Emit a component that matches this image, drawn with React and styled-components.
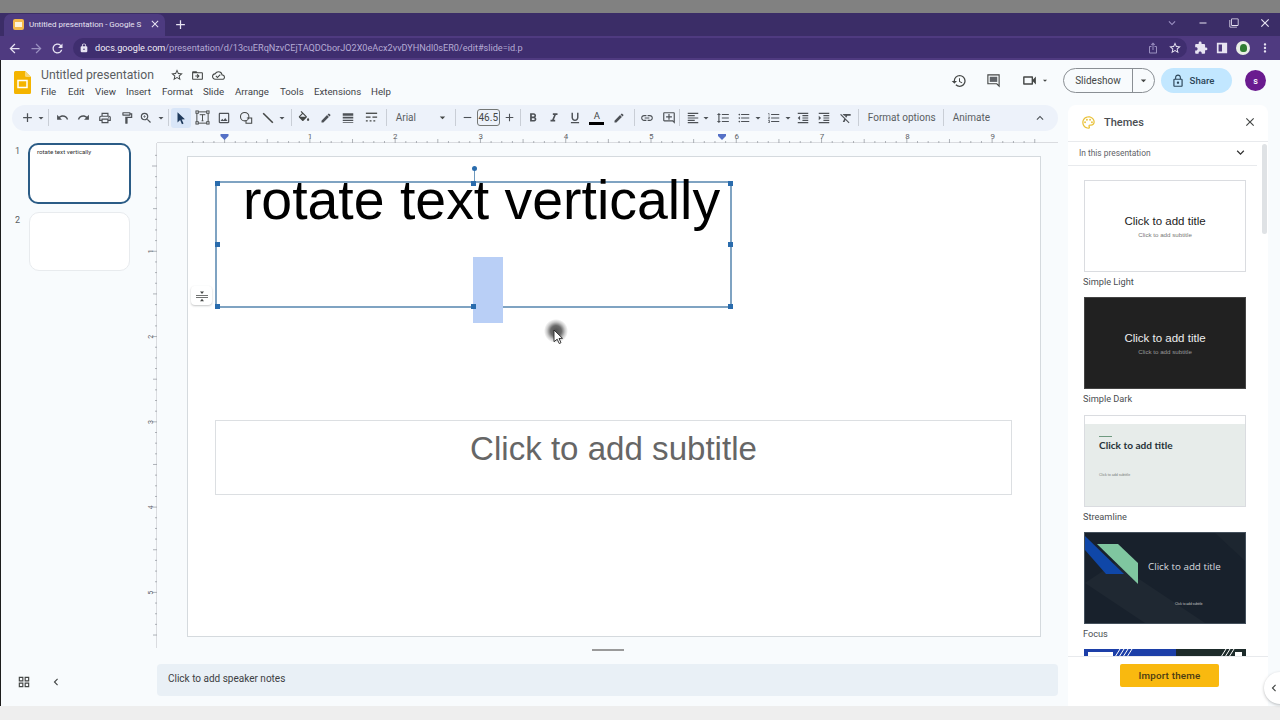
import styled, { createGlobalStyle } from 'styled-components';
import {
  MdAdd, MdArrowDropDown, MdUndo, MdRedo, MdOutlinePrint, MdOutlineFormatPaint, MdOutlineZoomIn,
  MdOutlineImage, MdEdit, MdLineWeight, MdRemove, MdFormatBold, MdFormatItalic,
  MdFormatUnderlined, MdLink, MdOutlineAddComment, MdFormatAlignLeft, MdFormatLineSpacing,
  MdFormatListBulleted, MdFormatListNumbered, MdFormatIndentDecrease, MdFormatIndentIncrease, MdFormatClear,
  MdExpandLess, MdExpandMore, MdHistory, MdOutlineVideocam, MdLockOutline, MdOutlinePalette, MdClose,
  MdOutlineGridView, MdChevronLeft, MdArrowBack, MdArrowForward, MdRefresh, MdLock, MdStarBorder,
  MdExtension, MdMoreVert, MdKeyboardArrowDown, MdFilterNone, MdDriveFileMoveOutline, MdOutlineCloudDone,
  MdOutlineIosShare,
} from 'react-icons/md';

const GlobalStyle = createGlobalStyle`
html, body {
  margin: 0;
  width: 1280px;
  height: 720px;
  overflow: hidden;
  background: #f8fbfd;
  font-family: Roboto, "Liberation Sans", sans-serif;
}
* { box-sizing: border-box; }
`;

const Page = styled.div`
  width: 1280px;
  height: 720px;
  display: flex;
  flex-direction: column;
  position: relative;
  overflow: hidden;
`;

const TopStrip = styled.div`
  height: 13px;
  flex: none;
  background: #818181;
`;

const TabStrip = styled.div`
  height: 23px;
  flex: none;
  background: #3b2d67;
  display: flex;
  align-items: flex-end;
  color: #e8e4f2;
  padding-left: 4px;
`;

const Tab = styled.div`
  width: 161px;
  height: 22px;
  background: #4d3b80;
  border-radius: 7px 7px 0 0;
  display: flex;
  align-items: center;
  padding: 0 0 2px 9px;
  font-size: 8px;
  white-space: nowrap;
`;

const Favicon = styled.div`
  width: 11px;
  height: 11px;
  border-radius: 2px;
  background: #f3b94a;
  margin-right: 5px;
  display: flex;
  align-items: center;
  justify-content: center;
  &::after {
    content: '';
    width: 7px;
    height: 5px;
    background: #fdf3da;
  }
`;

const TabTitle = styled.span`
  width: 114px;
`;

const ChromeSlot = styled.div`
  width: ${p => p.$w || 22}px;
  margin-left: ${p => p.$ml || 0}px;
  margin-bottom: ${p => p.$mb || 0}px;
  height: ${p => p.$h ? `${p.$h}px` : 'auto'};
  flex: none;
  display: flex;
  align-items: center;
  justify-content: center;
  color: ${p => p.$dim ? '#9a8fc0' : '#e8e4f2'};
  font-size: ${p => p.$size || 14}px;
`;

const WindowControls = styled.div`
  margin-left: auto;
  margin-bottom: 2px;
  height: 22px;
  display: flex;
  align-items: center;
`;

const AddressBar = styled.div`
  height: 24px;
  flex: none;
  background: #4f3a80;
  display: flex;
  align-items: center;
  padding-left: 3px;
`;

const Omnibox = styled.div`
  width: 1114px;
  height: 20px;
  margin-left: 5px;
  background: #3f2e6f;
  border-radius: 10px;
  display: flex;
  align-items: center;
  padding-left: 6px;
  font-size: 9.15px;
  color: #b5abd4;
  white-space: nowrap;
`;

const Host = styled.span`
  color: #f0edf7;
`;

const OmniEnd = styled.div`
  margin-left: auto;
  display: flex;
  align-items: center;
  padding-right: 1px;
`;

const ChromeAvatar = styled.div`
  width: 14px;
  height: 14px;
  border-radius: 50%;
  background: #e9efe6;
  display: flex;
  align-items: center;
  justify-content: center;
  &::after {
    content: '';
    width: 7px;
    height: 8px;
    border-radius: 50% 50% 40% 40%;
    background: #2f7d32;
  }
`;

const Docs = styled.div`
  flex: 1;
  min-height: 0;
  display: flex;
  flex-direction: column;
  background: #f8fbfd;
  box-shadow: inset 1px 0 0 #1d1d1d;
`;

const Header = styled.header`
  height: 45px;
  flex: none;
  display: flex;
  align-items: flex-start;
  padding: 0 14px;
`;

const LogoWrap = styled.div`
  margin-top: 11px;
  width: 17px;
  height: 23px;
  flex: none;
`;

const TitleBlock = styled.div`
  margin-left: 10px;
  padding-top: 7px;
`;

const TitleRow = styled.div`
  display: flex;
  align-items: center;
  height: 16px;
`;

const DocTitle = styled.div`
  font-size: 12.2px;
  color: #5a5e62;
  width: 125px;
  white-space: nowrap;
`;

const HeadIcon = styled.div`
  width: ${p => p.$w || 21}px;
  margin-left: ${p => p.$ml || 0}px;
  flex: none;
  display: flex;
  align-items: center;
  justify-content: center;
  color: #444746;
  font-size: ${p => p.$size || 13}px;
`;

const MenuRow = styled.nav`
  display: flex;
  height: 14px;
  margin-top: 1px;
  align-items: center;
`;

const MenuItem = styled.div`
  width: ${p => p.$w}px;
  font-size: 9.7px;
  color: #3f4347;
  white-space: nowrap;
`;

const HeaderRight = styled.div`
  margin-left: auto;
  margin-top: 8px;
  height: 25px;
  display: flex;
  align-items: center;
`;

const SlideshowButton = styled.div`
  width: 92px;
  height: 25px;
  margin-left: 13px;
  border: 1px solid #8a8f94;
  border-radius: 13px;
  display: flex;
  align-items: center;
  font-size: 10px;
  color: #444746;
`;

const SlideshowLabel = styled.div`
  width: 69px;
  height: 100%;
  display: flex;
  align-items: center;
  justify-content: center;
  border-right: 1px solid #8a8f94;
`;

const SlideshowCaret = styled.div`
  flex: 1;
  display: flex;
  justify-content: center;
  font-size: 13px;
`;

const ShareButton = styled.div`
  width: 71px;
  height: 25px;
  margin-left: 6px;
  padding-right: 8px;
  border-radius: 13px;
  background: #c2e7ff;
  color: #2c4558;
  display: flex;
  align-items: center;
  justify-content: center;
  gap: 5px;
  font-size: 9.6px;
  font-weight: 500;
  svg { font-size: 14px; }
`;

const Avatar = styled.div`
  width: 21px;
  height: 21px;
  margin-left: 13px;
  border-radius: 50%;
  background: #6a1b8f;
  color: #fff;
  font-size: 9px;
  font-weight: 500;
  display: flex;
  align-items: center;
  justify-content: center;
`;

const Body = styled.div`
  flex: 1;
  display: flex;
  min-height: 0;
`;

const LeftArea = styled.div`
  width: 1068px;
  display: flex;
  flex-direction: column;
`;

const Toolbar = styled.div`
  height: 26px;
  width: 1046px;
  margin-left: 12px;
  padding: 0 7px 1px 8px;
  flex: none;
  background: #edf2fa;
  border-radius: 13px;
  display: flex;
  align-items: center;
  font-size: 14px;
  color: #4d5156;
`;

const Tool = styled.div`
  width: ${p => p.$w}px;
  height: ${p => p.$active ? 20 : 22}px;
  flex: none;
  margin-left: ${p => p.$ml || 0}px;
  display: flex;
  align-items: center;
  justify-content: center;
  font-size: ${p => p.$size || 14}px;
  background: ${p => p.$active ? '#d9e6f8' : 'transparent'};
  border-radius: 3px;
  svg { flex: none; }
`;

const Caret = ({ w, ml }) => (
  <Tool $w={w} $ml={ml} $size={12}><MdArrowDropDown /></Tool>
);

const Sep = styled.div`
  width: 1px;
  height: 17px;
  flex: none;
  background: #c9ced6;
  margin-left: ${p => p.$ml || 0}px;
`;

const FontPicker = styled.div`
  width: 63px;
  flex: none;
  padding: 0 1px 0 9px;
  display: flex;
  align-items: center;
  justify-content: space-between;
  font-size: 10px;
  color: #5a5e62;
  svg { font-size: 13px; color: #444746; }
`;

const SizeInput = styled.div`
  width: 23px;
  height: 17px;
  margin-left: -1px;
  flex: none;
  border: 1px solid #747775;
  border-radius: 3px;
  font-size: 10px;
  display: flex;
  align-items: center;
  justify-content: center;
  color: #444746;
`;

const ColorA = styled.div`
  width: 15px;
  display: flex;
  flex-direction: column;
  align-items: center;
  font-size: 9.5px;
  line-height: 11px;
  color: #444746;
  &::after {
    content: '';
    width: 15px;
    height: 3px;
    margin-top: 1px;
    background: #000;
  }
`;

const ToolText = styled.div`
  margin-left: ${p => p.$ml}px;
  font-size: 10px;
  color: #5a5e62;
  white-space: nowrap;
  flex: none;
  width: ${p => p.$w}px;
`;

const Workspace = styled.div`
  height: 533px;
  display: flex;
  flex: none;
`;

const Filmstrip = styled.aside`
  width: 145px;
  flex: none;
  padding-top: 12px;
`;

const FilmRow = styled.div`
  display: flex;
  height: 69px;
`;

const FilmNumber = styled.div`
  width: 28px;
  padding-left: 15px;
  padding-top: 3px;
  font-size: 9px;
  color: #5a5e62;
`;

const FilmThumb = styled.div`
  background: #fff;
  border-radius: 10px;
  border: ${p => p.$active ? '2px solid #2b5c86' : '1px solid #e8ebee'};
  width: ${p => p.$active ? 103 : 101}px;
  height: ${p => p.$active ? 61 : 59}px;
  margin-left: ${p => p.$active ? 0 : 1}px;
  padding: 3px 0 0 7px;
  font-size: 6.2px;
  color: #333;
  white-space: nowrap;
`;

const EditorColumn = styled.div`
  flex: 1;
  display: flex;
  flex-direction: column;
`;

const RulerRow = styled.div`
  display: flex;
  flex: none;
  height: ${p => p.$h || 12}px;
`;

const Canvas = styled.div`
  flex: 1;
  padding: 13px 0 0 30px;
`;

const Slide = styled.section`
  width: 854px;
  height: 481px;
  background: #fff;
  border: 1px solid #d5dade;
  position: relative;
`;

const TitleBox = styled.div`
  position: absolute;
  left: 27px;
  top: 24px;
  width: 517px;
  height: 127px;
  border: 2px solid #7fa3c2;
`;

const TitleText = styled.div`
  position: absolute;
  left: 16px;
  right: 0;
  top: -15px;
  text-align: center;
  font-family: "Liberation Sans", Arial, sans-serif;
  font-size: 55.4px;
  line-height: 64px;
  color: #000;
  white-space: nowrap;
`;

const TextSelection = styled.div`
  position: absolute;
  left: 256px;
  top: 74px;
  width: 30px;
  height: 66px;
  background: #b9cff6;
`;

const Handle = styled.div`
  position: absolute;
  left: ${p => p.$x}%;
  top: ${p => p.$y}%;
  width: 5px;
  height: 5px;
  margin: -2.5px 0 0 -2.5px;
  background: #2a6cad;
`;

const RotateStem = styled.div`
  position: absolute;
  left: 50%;
  top: -15px;
  height: 15px;
  width: 1px;
  background: #6f99bd;
  &::before {
    content: '';
    position: absolute;
    left: -2px;
    top: -2px;
    width: 5px;
    height: 5px;
    border-radius: 50%;
    background: #2a6cad;
  }
`;

const AlignButton = styled.div`
  position: absolute;
  left: 3px;
  top: 129px;
  width: 21px;
  height: 19px;
  background: #fff;
  border-radius: 4px;
  box-shadow: 0 1px 2px rgba(60, 64, 67, .3);
  display: flex;
  align-items: center;
  justify-content: center;
`;

const SubtitleBox = styled.div`
  position: absolute;
  left: 27px;
  top: 263px;
  width: 797px;
  height: 75px;
  border: 1px solid #dcdfe2;
  text-align: center;
  padding-top: 9px;
  font-family: "Liberation Sans", Arial, sans-serif;
  font-size: 33.1px;
  line-height: 38px;
  color: #666;
`;

const CursorHalo = styled.div`
  position: absolute;
  left: 356px;
  top: 162px;
  width: 24px;
  height: 24px;
  border-radius: 50%;
  background: radial-gradient(closest-side, #4f4f4f 0%, #6a6a6a 45%, rgba(150, 150, 150, .5) 75%, rgba(200, 200, 200, 0) 100%);
`;

const CursorArrow = styled.svg`
  position: absolute;
  left: 365px;
  top: 172px;
  width: 11px;
  height: 15px;
`;

const SplitGrip = styled.div`
  width: 32px;
  height: 2px;
  margin: 12px 0 0 405px;
  background: #9a9a9a;
`;

const NotesRow = styled.div`
  height: 32px;
  flex: none;
  display: flex;
  width: 1058px;
`;

const FilmTools = styled.div`
  width: 157px;
  flex: none;
  display: flex;
  align-items: center;
  padding: 4px 0 0 17px;
  color: #444746;
  font-size: 14px;
  gap: 18px;
  svg { flex: none; }
`;

const Notes = styled.div`
  flex: 1;
  background: #e9f0f6;
  border-radius: 4px;
  display: flex;
  align-items: center;
  padding: 0 0 4px 11px;
  font-size: 10px;
  color: #3c4043;
`;

const Panel = styled.aside`
  width: 200px;
  background: #fff;
  border-radius: 8px 8px 0 0;
  display: flex;
  flex-direction: column;
  position: relative;
`;

const PanelHeader = styled.div`
  height: 37px;
  flex: none;
  border-bottom: 1px solid #e8eaed;
  display: flex;
  align-items: center;
  padding: 0 11px 2px 13px;
  font-size: 11px;
  font-weight: 500;
  color: #4a4e52;
`;

const PanelTitle = styled.div`
  margin-left: 8px;
  flex: 1;
`;

const PanelScroll = styled.div`
  flex: 1;
  min-height: 0;
  position: relative;
  overflow: hidden;
`;

const Scrollbar = styled.div`
  position: absolute;
  right: 1px;
  top: 2px;
  width: 5px;
  height: 90px;
  background: #dfe2e5;
  border-radius: 3px;
`;

const SectionHead = styled.div`
  width: 189px;
  height: 24px;
  border-bottom: 1px solid #e8eaed;
  display: flex;
  align-items: center;
  justify-content: space-between;
  padding: 0 9px 2px 11px;
  font-size: 8.4px;
  color: #5f6368;
  svg { font-size: 15px; color: #333; }
`;

const ThemeList = styled.div`
  padding: 14px 0 0 16px;
`;

const ThemeCard = styled.div`
  height: 117.3px;
  font-size: 9.2px;
  color: #4a4e52;
`;

const ThemeThumb = styled.div`
  width: 162px;
  height: 92px;
  border: 1px solid ${p => p.$border || '#dadce0'};
  background: ${p => p.$bg};
  color: ${p => p.$fg};
  position: relative;
  overflow: hidden;
  display: flex;
  flex-direction: column;
  align-items: center;
  justify-content: center;
  font-family: "Liberation Sans", Arial, sans-serif;
`;

const ThumbTitle = styled.div`
  font-size: 11.5px;
  margin-top: 1px;
`;

const ThumbSub = styled.div`
  font-size: 6.2px;
  margin-top: 4px;
  color: ${p => p.$c};
`;

const ThemeName = styled.div`
  margin: 4px 0 0 -1px;
  line-height: 12px;
`;

const StreamBand = styled.div`
  position: absolute;
  left: 0;
  right: 0;
  top: 0;
  height: 8px;
  background: #fff;
`;

const StreamRule = styled.div`
  position: absolute;
  left: 14px;
  top: 20px;
  width: 13px;
  height: 1px;
  background: #6f9a80;
`;

const StreamTitle = styled.div`
  position: absolute;
  left: 14px;
  top: 23px;
  font-family: Lato, sans-serif;
  font-weight: 700;
  font-size: 10.1px;
  color: #263238;
  white-space: nowrap;
`;

const StreamSub = styled.div`
  position: absolute;
  left: 14px;
  top: 57px;
  font-size: 3.6px;
  color: #777;
  white-space: nowrap;
`;

const FocusArt = styled.svg`
  position: absolute;
  left: 0;
  top: 0;
  width: 160px;
  height: 90px;
`;

const FocusTitle = styled.div`
  position: absolute;
  left: 63px;
  top: 27px;
  font-family: "Open Sans", sans-serif;
  font-size: 9.8px;
  color: #d6dadf;
  white-space: nowrap;
`;

const FocusSub = styled.div`
  position: absolute;
  left: 90px;
  top: 69px;
  font-size: 3.2px;
  color: #ccc;
  white-space: nowrap;
`;

const PanelFooter = styled.div`
  height: 50px;
  flex: none;
  background: #fff;
  border-top: 1px solid #e8eaed;
  display: flex;
  justify-content: center;
  padding: 7px 0 0 3px;
`;

const ImportButton = styled.div`
  width: 99px;
  height: 23px;
  border-radius: 2px;
  background: #f9b90f;
  color: #4a3c14;
  font-size: 9.8px;
  font-weight: 500;
  letter-spacing: .2px;
  display: flex;
  align-items: center;
  justify-content: center;
`;

const CollapseButton = styled.div`
  position: absolute;
  left: 1264px;
  top: 672px;
  width: 32px;
  height: 32px;
  border-radius: 50%;
  background: #fff;
  box-shadow: 0 1px 3px rgba(60, 64, 67, .35);
  display: flex;
  align-items: center;
  padding-left: 3px;
  font-size: 14px;
  color: #444746;
`;

const BottomStrip = styled.div`
  height: 14px;
  flex: none;
  background: #eeeeee;
`;

const hTicks = [];
for (let k = -3; k <= 76; k++) {
  const x = 224.6 + k * 10.66 - 157;
  const h = k % 8 === 0 ? 5 : k % 4 === 0 ? 4 : 2;
  hTicks.push(<line key={k} x1={x} x2={x} y1={12 - h} y2={12} stroke="#9aa0a6" strokeWidth=".8" />);
}
const vTicks = [];
for (let k = -1; k <= 44; k++) {
  const y = 166 + k * 10.66 - 143;
  const w = k % 8 === 0 ? 5 : k % 4 === 0 ? 4 : 2;
  vTicks.push(<line key={k} x1={12 - w} x2={12} y1={y} y2={y} stroke="#9aa0a6" strokeWidth=".8" />);
}

const HRuler = () => (
  <svg width="901" height="12" style={{ marginLeft: 12 }}>
    <line x1="0" x2="901" y1="11.5" y2="11.5" stroke="#dadce0" />
    {hTicks}
    {[1, 2, 3, 4, 5, 6, 7, 8, 9].map(n => (
      <text key={n} x={67.6 + n * 85.35} y="8" fontSize="8" fill="#5f6368" textAnchor="middle" fontFamily="Roboto">{n}</text>
    ))}
    <path d="M63.5 3h8v2l-4 4-4-4z" fill="#5470c6" />
    <path d="M561 3h8v2l-4 4-4-4z" fill="#5470c6" />
  </svg>
);

const VRuler = () => (
  <svg width="12" height="505" style={{ flex: 'none' }}>
    <line x1="11.5" x2="11.5" y1="0" y2="505" stroke="#dadce0" />
    {vTicks}
    {[1, 2, 3, 4, 5].map(n => {
      const y = 23 + n * 85.35;
      return <text key={n} x="6" y={y} fontSize="7" fill="#5f6368" textAnchor="middle" transform={`rotate(-90 6 ${y})`} dominantBaseline="middle" fontFamily="Roboto">{n}</text>;
    })}
  </svg>
);

const DocsLogo = () => (
  <svg viewBox="0 0 17 23" width="17" height="23">
    <path d="M1.5 0H11l6 6v15.5a1.5 1.5 0 0 1-1.5 1.5h-14A1.5 1.5 0 0 1 0 21.500V1.500A1.500 1.500 0 0 1 1.500 0z" fill="#f4b400" />
    <path d="M11 0l6 6h-4.500A1.500 1.500 0 0 1 11 4.500z" fill="#f8d777" />
    <path d="M4 9.500h9v7H4z" fill="none" stroke="#fff" strokeWidth="1.500" />
  </svg>
);

const TextBoxIcon = () => (
  <svg viewBox="0 0 16 16" width="15" height="15" fill="none" stroke="#444746" strokeWidth="1">
    <rect x="2" y="2" width="12" height="12" />
    <rect x="1" y="1" width="2.500" height="2.500" fill="#edf2fa" />
    <rect x="12.500" y="1" width="2.500" height="2.500" fill="#edf2fa" />
    <rect x="1" y="12.500" width="2.500" height="2.500" fill="#edf2fa" />
    <rect x="12.500" y="12.500" width="2.500" height="2.500" fill="#edf2fa" />
    <path d="M5 5h6M8 5v6.500M7 11.500h2" />
  </svg>
);

const ShapeIcon = () => (
  <svg viewBox="0 0 16 16" width="14" height="14" fill="none" stroke="#444746" strokeWidth="1.200">
    <circle cx="6.500" cy="6.500" r="4.800" />
    <path d="M9 8h5.500v6H8v-3.500" />
  </svg>
);

const LineIcon = () => (
  <svg viewBox="0 0 16 16" width="14" height="14">
    <path d="M2.500 2.500l11 11" stroke="#444746" strokeWidth="1.800" />
  </svg>
);

const CursorIcon = () => (
  <svg viewBox="0 0 16 16" width="14" height="14">
    <path d="M4 1.500l8.500 7.800-3.700.4 2.100 4.500-1.800.8-2.100-4.600L4 13z" fill="#1f3a5c" />
  </svg>
);

const FillIcon = () => (
  <svg viewBox="0 0 24 24" width="14" height="14" fill="#444746">
    <path d="M16.560 8.940L7.620 0 6.210 1.410l2.380 2.380-5.150 5.150c-.59.59-.59 1.540 0 2.120l5.500 5.500c.29.29.68.44 1.060.44s.77-.15 1.060-.44l5.500-5.500c.59-.58.59-1.530 0-2.120zM5.210 10L10 5.210 14.790 10H5.210zM19 11.500s-2 2.170-2 3.500c0 1.100.9 2 2 2s2-.9 2-2c0-1.330-2-3.500-2-3.500z" />
  </svg>
);

const DashIcon = () => (
  <svg viewBox="0 0 16 16" width="15" height="15" stroke="#444746">
    <path d="M2 3.500h12" strokeWidth="1.400" />
    <path d="M2 7.500h5M9 7.500h5" strokeWidth="1.400" />
    <path d="M2 11.500h2M6 11.500h2M10 11.500h2" strokeWidth="1.400" />
  </svg>
);

const CommentIcon = () => (
  <svg viewBox="0 0 16 16" width="15" height="15">
    <path d="M2 2h12v12l-2.500-2.500H2z" fill="none" stroke="#444746" strokeWidth="1.200" />
    <rect x="4" y="4" width="8" height="5.500" fill="#5f6368" />
  </svg>
);

const VerticalAlignIcon = () => (
  <svg viewBox="0 0 14 14" width="14" height="14" fill="#444746">
    <path d="M1 6h12v.8H1zM1 8h12v.8H1zM7 5L5 2.500h4zM7 9.800l2 2.500H5z" />
  </svg>
);

const SidePanelIcon = () => (
  <svg viewBox="0 0 14 14" width="12" height="12">
    <path d="M2 2h10v10H2z" fill="none" stroke="#e8e4f2" strokeWidth="2" />
    <rect x="7" y="2" width="5" height="10" fill="#e8e4f2" />
  </svg>
);

const ThemeFocusShapes = () => (
  <FocusArt viewBox="0 0 160 90">
    <path d="M0 50L60 90H120L30 30z" fill="#1f2832" />
    <path d="M130 0L160 28V0z" fill="#1d2630" />
    <path d="M0 3L39 41H21L0 17z" fill="#0f47a8" />
    <path d="M12 11H33L53 30V51z" fill="#7fc6a0" />
  </FocusArt>
);

const ThemeFifthArt = () => (
  <svg viewBox="0 0 162 8" width="162" height="8" style={{ display: 'block' }}>
    <rect width="92" height="8" fill="#1c3fa8" />
    <rect x="92" width="70" height="8" fill="#1d2b2a" />
    <rect x="4" y="3" width="25" height="5" fill="#fff" />
    <rect x="151" y="3" width="7" height="5" fill="#fff" />
    <path d="M31 8l5-8M35 8l5-8M39 8l5-8M43 8l5-8M137 8l5-8M141 8l5-8M145 8l5-8" stroke="#fff" strokeWidth="1" />
  </svg>
);

const handles = [[0, 0], [50, 0], [100, 0], [0, 50], [100, 50], [0, 100], [50, 100], [100, 100]];

export default function App() {
  return (
    <Page>
      <GlobalStyle />
      <TopStrip />
      <TabStrip>
        <Tab>
          <Favicon />
          <TabTitle>Untitled presentation - Google S</TabTitle>
          <ChromeSlot $w={14} $ml={5} $size={12}><MdClose /></ChromeSlot>
        </Tab>
        <ChromeSlot $w={18} $ml={6} $h={22} $mb={1} $size={15}><MdAdd /></ChromeSlot>
        <WindowControls>
          <ChromeSlot $w={30} $dim $size={14}><MdKeyboardArrowDown /></ChromeSlot>
          <ChromeSlot $w={31} $size={12}><MdRemove /></ChromeSlot>
          <ChromeSlot $w={31} $size={10}><MdFilterNone /></ChromeSlot>
          <ChromeSlot $w={31} $size={14}><MdClose /></ChromeSlot>
        </WindowControls>
      </TabStrip>
      <AddressBar>
        <ChromeSlot $size={15}><MdArrowBack /></ChromeSlot>
        <ChromeSlot $dim $size={15}><MdArrowForward /></ChromeSlot>
        <ChromeSlot $ml={-1} $size={15}><MdRefresh /></ChromeSlot>
        <Omnibox>
          <MdLock size={10} color="#e8e4f2" style={{ flex: 'none', marginRight: 6 }} />
          <span><Host>docs.google.com</Host>/presentation/d/13cuERqNzvCEjTAQDCborJO2X0eAcx2vvDYHNdl0sER0/edit#slide=id.p</span>
          <OmniEnd>
            <ChromeSlot $dim $size={12}><MdOutlineIosShare /></ChromeSlot>
            <ChromeSlot $size={14}><MdStarBorder /></ChromeSlot>
          </OmniEnd>
        </Omnibox>
        <ChromeSlot $ml={3} $size={14}><MdExtension /></ChromeSlot>
        <ChromeSlot $w={20}><SidePanelIcon /></ChromeSlot>
        <ChromeSlot $w={22}><ChromeAvatar /></ChromeSlot>
        <ChromeSlot $w={22} $size={14}><MdMoreVert /></ChromeSlot>
      </AddressBar>
      <Docs>
        <Header>
          <LogoWrap><DocsLogo /></LogoWrap>
          <TitleBlock>
            <TitleRow>
              <DocTitle>Untitled presentation</DocTitle>
              <HeadIcon $size={14}><MdStarBorder /></HeadIcon>
              <HeadIcon><MdDriveFileMoveOutline /></HeadIcon>
              <HeadIcon><MdOutlineCloudDone /></HeadIcon>
            </TitleRow>
            <MenuRow>
              <MenuItem $w={27}>File</MenuItem>
              <MenuItem $w={27}>Edit</MenuItem>
              <MenuItem $w={31}>View</MenuItem>
              <MenuItem $w={36}>Insert</MenuItem>
              <MenuItem $w={41}>Format</MenuItem>
              <MenuItem $w={32}>Slide</MenuItem>
              <MenuItem $w={45}>Arrange</MenuItem>
              <MenuItem $w={34}>Tools</MenuItem>
              <MenuItem $w={57}>Extensions</MenuItem>
              <MenuItem $w={24}>Help</MenuItem>
            </MenuRow>
          </TitleBlock>
          <HeaderRight>
            <HeadIcon $w={22} $size={16}><MdHistory /></HeadIcon>
            <HeadIcon $w={22} $ml={12} $size={16}><CommentIcon /></HeadIcon>
            <HeadIcon $w={22} $ml={14} $size={17}><MdOutlineVideocam /></HeadIcon>
            <HeadIcon $w={10} $size={13}><MdArrowDropDown /></HeadIcon>
            <SlideshowButton>
              <SlideshowLabel>Slideshow</SlideshowLabel>
              <SlideshowCaret><MdArrowDropDown /></SlideshowCaret>
            </SlideshowButton>
            <ShareButton><MdLockOutline />Share</ShareButton>
            <Avatar>s</Avatar>
          </HeaderRight>
        </Header>
        <Body>
          <LeftArea>
            <Toolbar>
              <Tool $w={14} $size={15}><MdAdd /></Tool>
              <Caret w={14} />
              <Sep />
              <Tool $w={21.5} $ml={2.25} $size={13}><MdUndo /></Tool>
              <Tool $w={21.5} $size={13}><MdRedo /></Tool>
              <Tool $w={21.5}><MdOutlinePrint /></Tool>
              <Tool $w={21.5}><MdOutlineFormatPaint /></Tool>
              <Tool $w={18}><MdOutlineZoomIn /></Tool>
              <Caret w={11} />
              <Sep $ml={2} />
              <Tool $w={20} $ml={2} $active><CursorIcon /></Tool>
              <Tool $w={22}><TextBoxIcon /></Tool>
              <Tool $w={21.5}><MdOutlineImage /></Tool>
              <Tool $w={23}><ShapeIcon /></Tool>
              <Tool $w={21}><LineIcon /></Tool>
              <Caret w={7} />
              <Sep $ml={5} />
              <Tool $w={22} $ml={1}><FillIcon /></Tool>
              <Tool $w={22} $size={12}><MdEdit /></Tool>
              <Tool $w={23}><MdLineWeight /></Tool>
              <Tool $w={23}><DashIcon /></Tool>
              <Sep $ml={3} />
              <FontPicker>Arial<MdArrowDropDown /></FontPicker>
              <Sep $ml={5} />
              <Tool $w={20} $ml={2} $size={13}><MdRemove /></Tool>
              <SizeInput>46.5</SizeInput>
              <Tool $w={20} $size={13}><MdAdd /></Tool>
              <Sep />
              <Tool $w={22} $ml={1}><MdFormatBold /></Tool>
              <Tool $w={21}><MdFormatItalic /></Tool>
              <Tool $w={21}><MdFormatUnderlined /></Tool>
              <Tool $w={22}><ColorA>A</ColorA></Tool>
              <Tool $w={23} $size={12}><MdEdit /></Tool>
              <Sep $ml={3.5} />
              <Tool $w={22} $ml={1}><MdLink /></Tool>
              <Tool $w={21}><MdOutlineAddComment /></Tool>
              <Sep />
              <Tool $w={21} $ml={2}><MdFormatAlignLeft /></Tool>
              <Caret w={5} />
              <Tool $w={29}><MdFormatLineSpacing /></Tool>
              <Tool $w={14}><MdFormatListBulleted /></Tool>
              <Caret w={14} />
              <Tool $w={17}><MdFormatListNumbered /></Tool>
              <Caret w={11} />
              <Tool $w={20}><MdFormatIndentDecrease /></Tool>
              <Tool $w={22}><MdFormatIndentIncrease /></Tool>
              <Tool $w={22}><MdFormatClear /></Tool>
              <Sep $ml={1} />
              <ToolText $ml={8.5} $w={66}>Format options</ToolText>
              <Sep $ml={9} />
              <ToolText $ml={9} $w={36}>Animate</ToolText>
              <Tool $w={22} $ml={40}><MdExpandLess /></Tool>
            </Toolbar>
            <Workspace>
              <Filmstrip>
                <FilmRow>
                  <FilmNumber>1</FilmNumber>
                  <FilmThumb $active>rotate text vertically</FilmThumb>
                </FilmRow>
                <FilmRow>
                  <FilmNumber>2</FilmNumber>
                  <FilmThumb />
                </FilmRow>
              </Filmstrip>
              <EditorColumn>
                <RulerRow><HRuler /></RulerRow>
                <RulerRow $h={521}>
                  <VRuler />
                  <Canvas>
                    <Slide>
                      <TitleBox>
                        <TextSelection />
                        <TitleText>rotate text vertically</TitleText>
                        <RotateStem />
                        {handles.map(([x, y]) => <Handle key={`${x}-${y}`} $x={x} $y={y} />)}
                      </TitleBox>
                      <AlignButton><VerticalAlignIcon /></AlignButton>
                      <SubtitleBox>Click to add subtitle</SubtitleBox>
                      <CursorHalo />
                      <CursorArrow viewBox="0 0 11 15">
                        <path d="M1 1l8.500 8.300-3.500.2 2 4.200-1.800.8-2-4.300L1 12.700z" fill="#fff" stroke="#222" strokeWidth=".9" />
                      </CursorArrow>
                    </Slide>
                    <SplitGrip />
                  </Canvas>
                </RulerRow>
              </EditorColumn>
            </Workspace>
            <NotesRow>
              <FilmTools>
                <MdOutlineGridView />
                <MdChevronLeft />
              </FilmTools>
              <Notes>Click to add speaker notes</Notes>
            </NotesRow>
          </LeftArea>
          <Panel>
            <PanelHeader>
              <MdOutlinePalette size={15} color="#e9c23b" />
              <PanelTitle>Themes</PanelTitle>
              <MdClose size={14} color="#444746" />
            </PanelHeader>
            <PanelScroll>
              <Scrollbar />
              <SectionHead>In this presentation<MdExpandMore /></SectionHead>
              <ThemeList>
                <ThemeCard>
                  <ThemeThumb $bg="#fff" $fg="#222">
                    <ThumbTitle>Click to add title</ThumbTitle>
                    <ThumbSub $c="#777">Click to add subtitle</ThumbSub>
                  </ThemeThumb>
                  <ThemeName>Simple Light</ThemeName>
                </ThemeCard>
                <ThemeCard>
                  <ThemeThumb $bg="#212121" $fg="#eee" $border="#444">
                    <ThumbTitle>Click to add title</ThumbTitle>
                    <ThumbSub $c="#999">Click to add subtitle</ThumbSub>
                  </ThemeThumb>
                  <ThemeName>Simple Dark</ThemeName>
                </ThemeCard>
                <ThemeCard>
                  <ThemeThumb $bg="#e7ecea">
                    <StreamBand />
                    <StreamRule />
                    <StreamTitle>Click to add title</StreamTitle>
                    <StreamSub>Click to add subtitle</StreamSub>
                  </ThemeThumb>
                  <ThemeName>Streamline</ThemeName>
                </ThemeCard>
                <ThemeCard>
                  <ThemeThumb $bg="#18212c" $border="#44505c">
                    <ThemeFocusShapes />
                    <FocusTitle>Click to add title</FocusTitle>
                    <FocusSub>Click to add subtitle</FocusSub>
                  </ThemeThumb>
                  <ThemeName>Focus</ThemeName>
                </ThemeCard>
                <ThemeFifthArt />
              </ThemeList>
            </PanelScroll>
            <PanelFooter>
              <ImportButton>Import theme</ImportButton>
            </PanelFooter>
          </Panel>
        </Body>
        <BottomStrip />
      </Docs>
      <CollapseButton><MdChevronLeft /></CollapseButton>
    </Page>
  );
}
